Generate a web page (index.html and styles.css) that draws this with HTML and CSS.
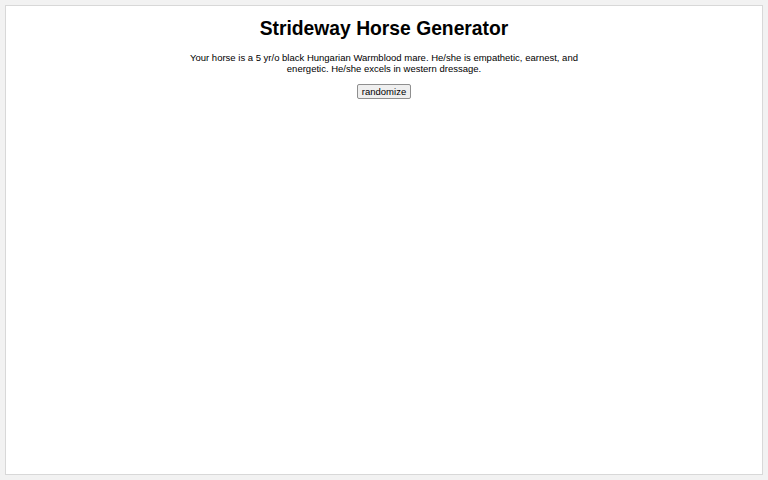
FILE: index.html
```html
<!DOCTYPE html>
<html lang="en">
<head>
  <meta charset="UTF-8" />
  <title>Strideway Horse Generator</title>
  <link rel="stylesheet" href="styles.css">
</head>
<body>
  <div class="generator">
    <h1>Strideway Horse Generator</h1>
    <p class="result" id="result">Your horse is a 5 yr/o black Hungarian Warmblood mare. He/she is empathetic, earnest, and energetic. He/she excels in western dressage.</p>
    <button class="randomize-btn" type="button">randomize</button>
  </div>
</body>
</html>
```

FILE: styles.css
```css
* {
  box-sizing: border-box;
}

html, body {
  height: 100%;
}

body {
  margin: 0;
  padding: 5px;
  background: #f2f2f2;
  font-family: "Liberation Sans", Arial, sans-serif;
  color: #000;
}

.generator {
  height: 100%;
  background: #fff;
  border: 1px solid #d8d8d8;
  text-align: center;
  padding-top: 12px;
}

h1 {
  margin: 0 0 12px;
  font-size: 19.3px;
  font-weight: bold;
  line-height: 22px;
}

.result {
  width: 400px;
  margin: 0 auto 7px;
  font-size: 9.5px;
  line-height: 11px;
}

.randomize-btn {
  font-family: "Liberation Sans", Arial, sans-serif;
  font-size: 9.5px;
  padding: 1px 4px;
  background: #efefef;
  border: 1px solid #8f8f8f;
  border-radius: 2px;
  color: #000;
}
```
